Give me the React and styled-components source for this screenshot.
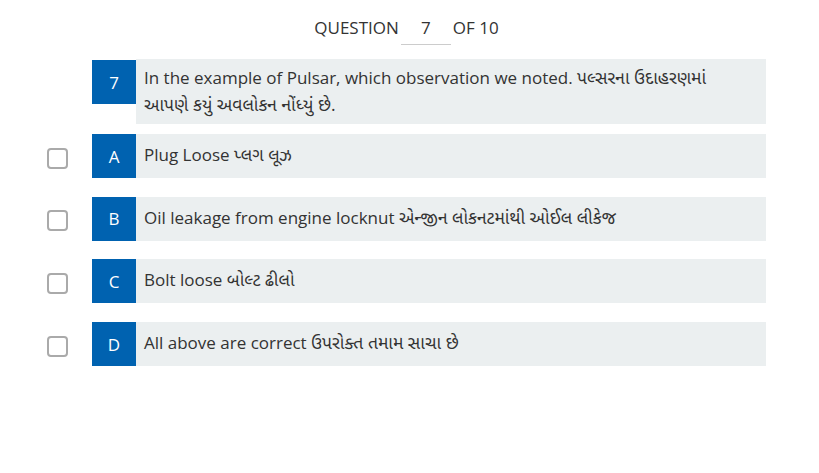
import React from 'react'
import styled, { createGlobalStyle } from 'styled-components'

const GlobalStyle = createGlobalStyle`
  body {
    margin: 0;
    background: #fff;
    font-family: "Open Sans", "Noto Sans", "Noto Sans Gujarati", sans-serif;
    color: #333;
  }
`;

const Page = styled.div`
  width: 725px;
  margin: 0 auto;
  padding-top: 16px;
`;

const Header = styled.div`
  display: flex;
  justify-content: center;
  align-items: baseline;
  font-size: 17px;
  color: #333;
  margin-bottom: 18px;
  padding-right: 6px;
  height: 26px;
`;

const QNum = styled.span`
  display: inline-block;
  width: 50px;
  margin: 0 2px;
  text-align: center;
  border-bottom: 1px solid #ccc;
  padding-bottom: 5px;
`;

const List = styled.div`
  display: flex;
  flex-direction: column;
`;

const Row = styled.div`
  display: flex;
  align-items: flex-start;
  margin-bottom: ${p => p.$gap}px;
`;

const CheckCol = styled.div`
  width: 45px;
  flex-shrink: 0;
  display: flex;
  align-items: center;
  height: 44px;
`;

const Check = styled.span`
  display: block;
  width: 17px;
  height: 17px;
  border: 2px solid #aaa;
  border-radius: 4px;
  margin-top: 4px;
`;

const Label = styled.div`
  width: 44px;
  height: 44px;
  flex-shrink: 0;
  background: #0062b0;
  color: #fff;
  font-size: 17px;
  display: flex;
  align-items: center;
  justify-content: center;
`;

const Body = styled.div`
  width: 630px;
  height: ${p => (p.$question ? '65px' : '44px')};
  box-sizing: border-box;
  background: #ebeff0;
  padding: ${p => (p.$question ? '5px 20px 0 8px' : '7px 8px 0 8px')};
  margin-top: ${p => (p.$question ? '-1px' : '0')};
  font-size: 17px;
  line-height: 26px;
  color: #333;
`;

const Guj = styled.span`
  font-size: 17.5px;
`;

const options = [
  { key: 'A', en: 'Plug Loose', gu: 'પ્લગ લૂઝ' },
  { key: 'B', en: 'Oil leakage from engine locknut', gu: 'એન્જીન લોકનટમાંથી ઓઈલ લીકેજ' },
  { key: 'C', en: 'Bolt loose', gu: 'બોલ્ટ ઢીલો' },
  { key: 'D', en: 'All above are correct', gu: 'ઉપરોક્ત તમામ સાચા છે' },
];

export default function App() {
  return (
    <>
      <GlobalStyle />
      <Page>
        <Header>
          QUESTION<QNum>7</QNum>OF 10
        </Header>
        <List>
          <Row $gap={10}>
            <CheckCol />
            <Label>7</Label>
            <Body $question>
              In the example of Pulsar, which observation we noted. <Guj>પલ્સરના ઉદાહરણમાં આપણે કયું અવલોકન નોંધ્યું છે.</Guj>
            </Body>
          </Row>
          {options.map((o, i) => (
            <Row key={o.key} $gap={i === 2 ? 19 : 18.5}>
              <CheckCol>
                <Check />
              </CheckCol>
              <Label>{o.key}</Label>
              <Body>
                {o.en} <Guj>{o.gu}</Guj>
              </Body>
            </Row>
          ))}
        </List>
      </Page>
    </>
  )
}
